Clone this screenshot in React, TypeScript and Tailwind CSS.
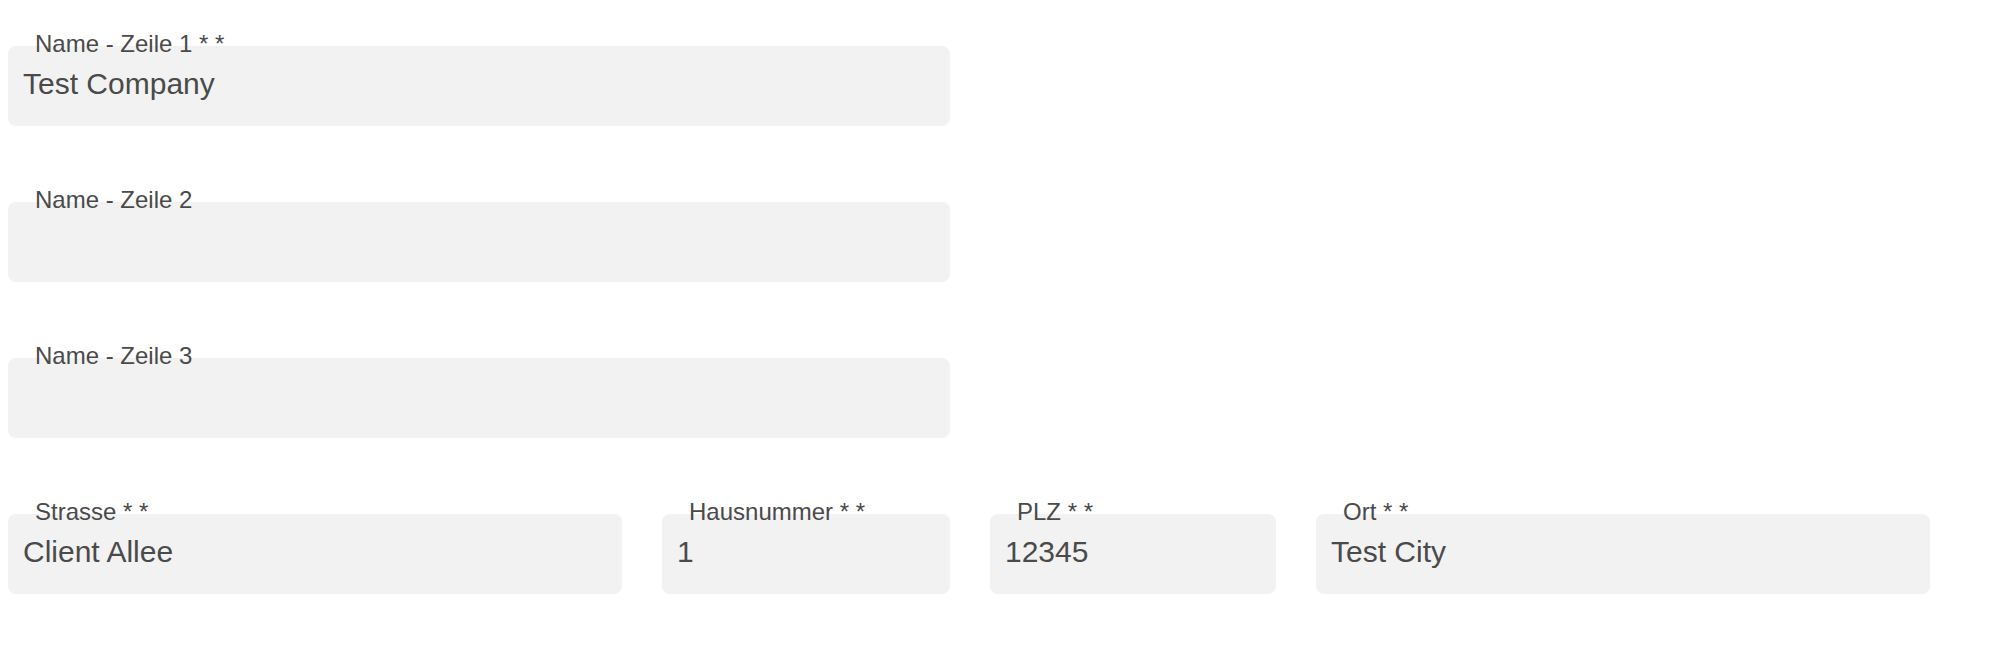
import React from 'react';

type FieldProps = {
  label: string;
  value?: string;
  className?: string;
};

function Field({ label, value = '', className = '' }: FieldProps): React.JSX.Element {
  return (
    <div className={`flex flex-col ${className}`}>
      {/* Floating label sits over the top edge of the input */}
      <label className="relative z-10 h-[28px] pl-[27px] text-[24px] leading-[28px] text-[#4a4a4a]">
        {label}
      </label>
      <input
        readOnly
        value={value}
        className="-mt-[12px] h-[80px] w-full rounded-[8px] bg-[#f2f2f2] px-[15px] pt-[18px] pb-[22px] text-[30px] text-[#4a4a4a] outline-none"
      />
    </div>
  );
}

export default function App(): React.JSX.Element {
  return (
    <div
      className="min-h-[650px] w-full bg-white pt-[30px] pl-[8px]"
      style={{ fontFamily: '"Liberation Sans", Arial, Helvetica, sans-serif' }}
    >
      <div className="flex flex-col gap-[60px]">
        <Field label="Name - Zeile 1 * *" value="Test Company" className="w-[942px]" />
        <Field label="Name - Zeile 2" className="w-[942px]" />
        <Field label="Name - Zeile 3" className="w-[942px]" />
        <div className="flex gap-[40px]">
          <Field label="Strasse * *" value="Client Allee" className="w-[614px]" />
          <Field label="Hausnummer * *" value="1" className="w-[288px]" />
          <Field label="PLZ * *" value="12345" className="w-[286px]" />
          <Field label="Ort * *" value="Test City" className="w-[614px]" />
        </div>
      </div>
    </div>
  );
}
